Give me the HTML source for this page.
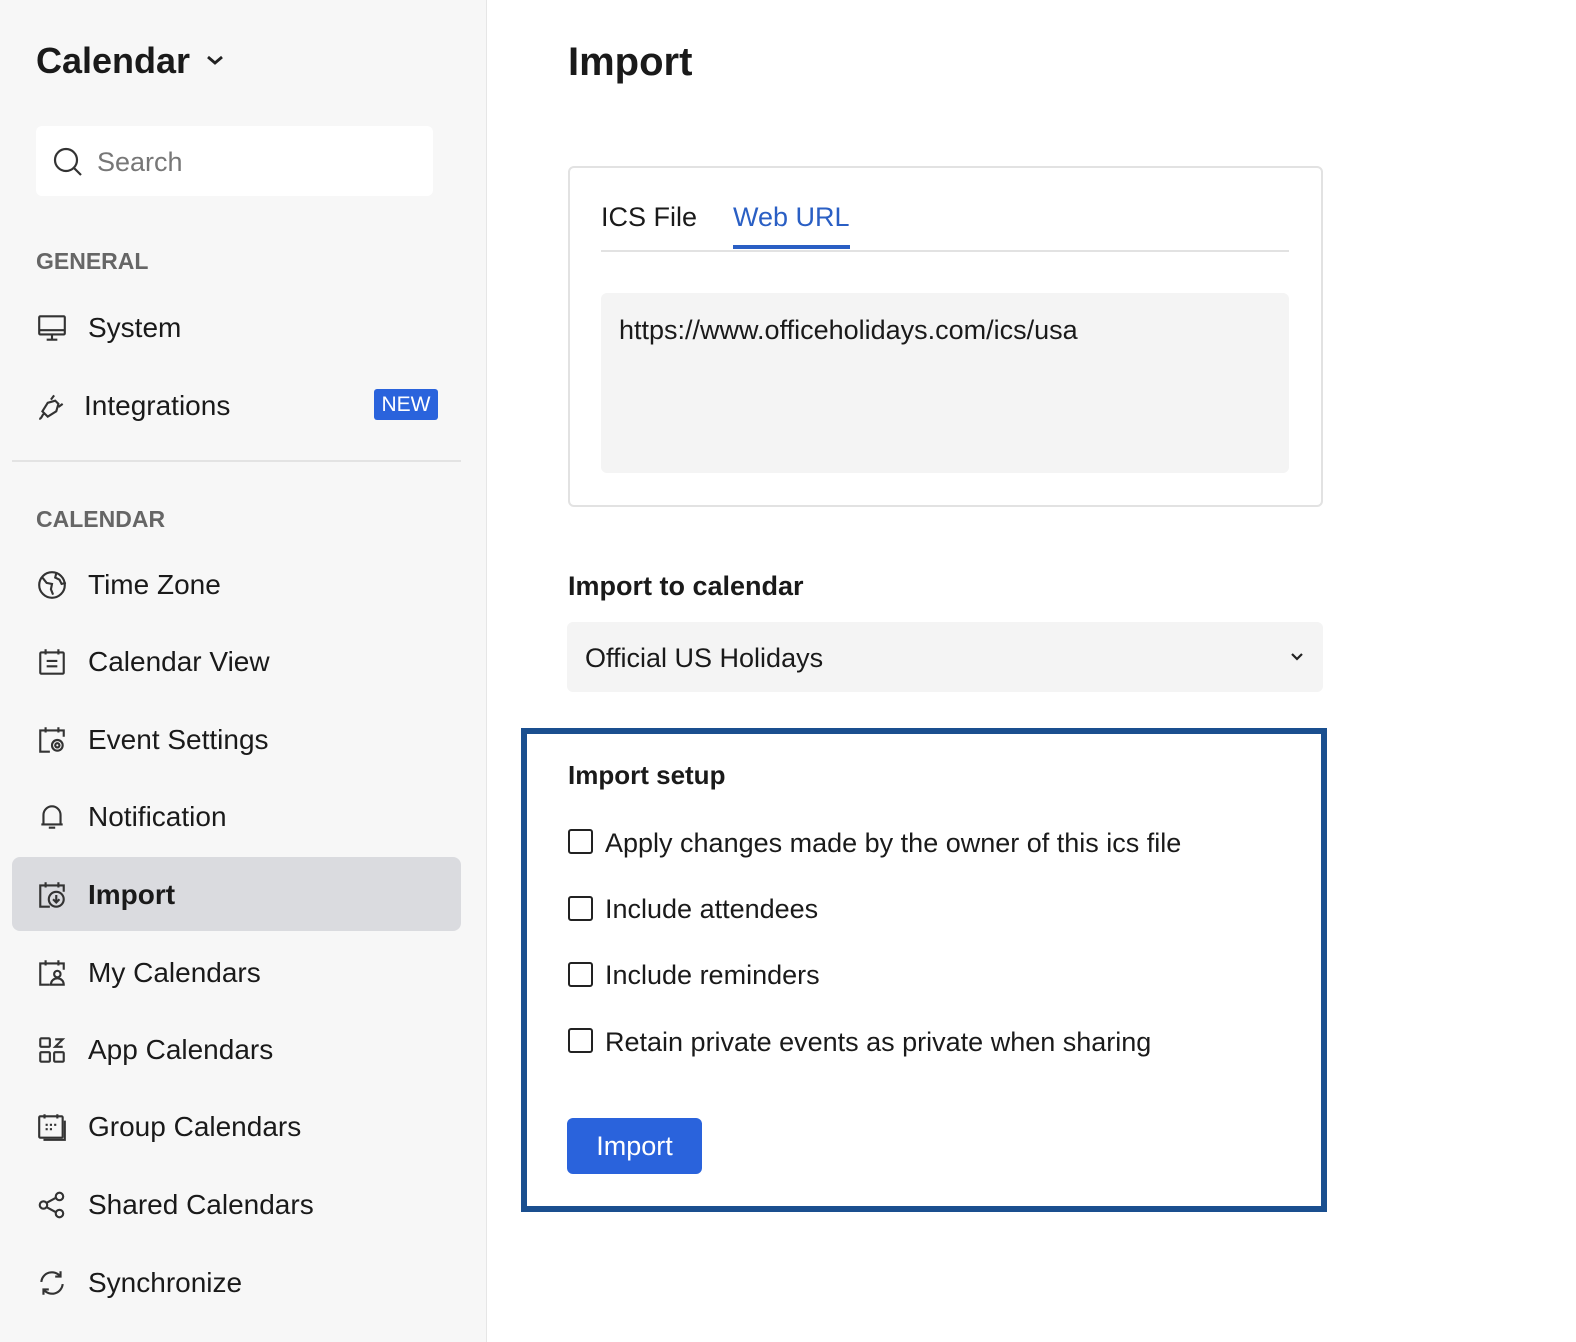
<!DOCTYPE html>
<html><head><meta charset="utf-8"><style>
*{margin:0;padding:0;box-sizing:border-box}
body{width:1576px;height:1342px;font-family:"Liberation Sans",sans-serif;color:#1a1a1a;background:#fff;position:relative;overflow:hidden}
.side{position:absolute;left:0;top:0;width:487px;height:1342px;background:#f7f7f7;border-right:1px solid #e6e6e6}
.abs{position:absolute}
.nav{position:absolute;left:36px;font-size:28px;display:flex;align-items:center;white-space:nowrap}
.nav svg{width:32px;height:32px;margin-right:20px;fill:none;stroke:#333;stroke-width:2}
.sec{position:absolute;left:36px;font-size:23px;color:#666;font-weight:bold}
.cb{position:absolute;left:568px;width:25px;height:25px;border:2px solid #222;border-radius:3px}
.cl{position:absolute;left:605px;font-size:27px}
</style></head><body>
<div class="side">
<div class="abs" style="left:36px;top:40px;font-size:36px;font-weight:bold">Calendar</div>
<svg class="abs" style="left:203px;top:48px" width="24" height="24" viewBox="0 0 24 24"><path d="M5 9l7 6 7-6" fill="none" stroke="#222" stroke-width="2.8"/></svg>
<div class="abs" style="left:36px;top:126px;width:397px;height:70px;background:#fff;border-radius:6px"></div>
<svg class="abs" style="left:52px;top:146px" width="32" height="32" viewBox="0 0 32 32"><circle cx="14" cy="14" r="11" fill="none" stroke="#333" stroke-width="2.2"/><path d="M22 22l7 7" stroke="#333" stroke-width="2.2"/></svg>
<div class="abs" style="left:97px;top:147px;font-size:27px;color:#777">Search</div>
<div class="sec" style="top:248px">GENERAL</div>
<div class="nav" style="top:312px"><svg viewBox="0 0 30 30"><rect x="3" y="4" width="24" height="17" rx="1"/><path d="M3 17h24M15 21v5M10 26h10"/></svg>System</div>
<div class="nav" style="top:390px"><svg viewBox="0 0 30 30"><path d="M3 27c3 0 2-4 5-5M8 22l-2-2 5-8 7-2 3 3-2 7-8 5zM17 5l-3 4M25 13l-4 3"/></svg><span style="margin-left:-4px">Integrations</span></div>
<div class="abs" style="left:374px;top:389px;width:64px;height:31px;background:#2a63dc;border-radius:3px;color:#fff;font-size:21px;text-align:center;line-height:31px">NEW</div>
<div class="abs" style="left:12px;top:460px;width:449px;height:2px;background:#e3e3e3"></div>
<div class="sec" style="top:506px">CALENDAR</div>
<div class="nav" style="top:569px"><svg viewBox="0 0 30 30"><circle cx="15" cy="15" r="12"/><path d="M6 8l4 5 5 1-1 5 2 5M19 4l-1 4 4 2 2 4 4-1"/></svg>Time Zone</div>
<div class="nav" style="top:646px"><svg viewBox="0 0 30 30"><rect x="4" y="6" width="22" height="20" rx="1"/><path d="M9 3v5M21 3v5M10 14h10M10 19h10"/></svg>Calendar View</div>
<div class="nav" style="top:724px"><svg viewBox="0 0 30 30"><path d="M13 26H4V6h22v6M9 3v5M21 3v5"/><circle cx="20" cy="20" r="5"/><circle cx="20" cy="20" r="2"/></svg>Event Settings</div>
<div class="nav" style="top:801px"><svg viewBox="0 0 30 30"><path d="M7 22V13a8 8 0 0116 0v9H5h20M12 25h6"/></svg>Notification</div>
<div class="abs" style="left:12px;top:857px;width:449px;height:74px;background:#dadbdf;border-radius:8px"></div>
<div class="nav" style="top:879px;font-weight:bold"><svg viewBox="0 0 30 30"><path d="M13 26H4V6h22v6M9 3v5M21 3v5"/><circle cx="19" cy="19" r="7"/><path d="M19 15v7M16 19l3 3 3-3"/></svg>Import</div>
<div class="nav" style="top:957px"><svg viewBox="0 0 30 30"><path d="M13 26H4V6h22v6M9 3v5M21 3v5"/><circle cx="20" cy="16" r="3"/><path d="M14 26c0-4 3-6 6-6s6 2 6 6z"/></svg>My Calendars</div>
<div class="nav" style="top:1034px"><svg viewBox="0 0 30 30"><rect x="4" y="4" width="9" height="8" rx="1"/><rect x="4" y="17" width="9" height="9" rx="1"/><rect x="17" y="17" width="9" height="9" rx="1"/><path d="M18 5h7l-7 7h7"/></svg>App Calendars</div>
<div class="nav" style="top:1111px"><svg viewBox="0 0 30 30"><rect x="3" y="5" width="22" height="20" rx="1"/><path d="M27 9v18H7M8 3v4M20 3v4M9 13h2M13 13h2M17 13h2M9 17h2M13 17h2"/></svg>Group Calendars</div>
<div class="nav" style="top:1189px"><svg viewBox="0 0 30 30"><circle cx="7" cy="15" r="3.5"/><circle cx="22" cy="7" r="3.5"/><circle cx="22" cy="23" r="3.5"/><path d="M10 13l9-5M10 17l9 5"/></svg>Shared Calendars</div>
<div class="nav" style="top:1267px"><svg viewBox="0 0 30 30"><path d="M5 14a10 10 0 0118-5M25 16a10 10 0 01-18 5M23 4v5h-5M7 26v-5h5"/></svg>Synchronize</div>
</div>

<div class="abs" style="left:568px;top:40px;font-size:40px;font-weight:bold">Import</div>
<div class="abs" style="left:568px;top:166px;width:755px;height:341px;border:2px solid #e2e2e2;border-radius:6px"></div>
<div class="abs" style="left:601px;top:202px;font-size:27px">ICS File</div>
<div class="abs" style="left:733px;top:202px;font-size:27px;color:#2a5fc4">Web URL</div>
<div class="abs" style="left:601px;top:250px;width:688px;height:2px;background:#e2e2e2"></div>
<div class="abs" style="left:733px;top:245px;width:117px;height:4px;background:#2a5fc4"></div>
<div class="abs" style="left:601px;top:293px;width:688px;height:180px;background:#f4f4f4;border-radius:6px"></div>
<div class="abs" style="left:619px;top:315px;font-size:27px">https://www.officeholidays.com/ics/usa</div>
<div class="abs" style="left:568px;top:571px;font-size:27px;font-weight:bold">Import to calendar</div>
<div class="abs" style="left:567px;top:622px;width:756px;height:70px;background:#f4f4f4;border-radius:6px"></div>
<div class="abs" style="left:585px;top:643px;font-size:27px">Official US Holidays</div>
<svg class="abs" style="left:1288px;top:648px" width="18" height="18" viewBox="0 0 18 18"><path d="M4 6l5 5 5-5" fill="none" stroke="#222" stroke-width="2.2"/></svg>
<div class="abs" style="left:521px;top:728px;width:806px;height:484px;border:6px solid #1a4f8f"></div>
<div class="abs" style="left:568px;top:760px;font-size:26px;font-weight:bold">Import setup</div>
<div class="cb" style="top:829px"></div><div class="cl" style="top:828px">Apply changes made by the owner of this ics file</div>
<div class="cb" style="top:896px"></div><div class="cl" style="top:894px">Include attendees</div>
<div class="cb" style="top:962px"></div><div class="cl" style="top:960px">Include reminders</div>
<div class="cb" style="top:1028px"></div><div class="cl" style="top:1027px">Retain private events as private when sharing</div>
<div class="abs" style="left:567px;top:1118px;width:135px;height:56px;background:#2a63dc;border-radius:6px;color:#fff;font-size:27px;text-align:center;line-height:56px">Import</div>
</body></html>
